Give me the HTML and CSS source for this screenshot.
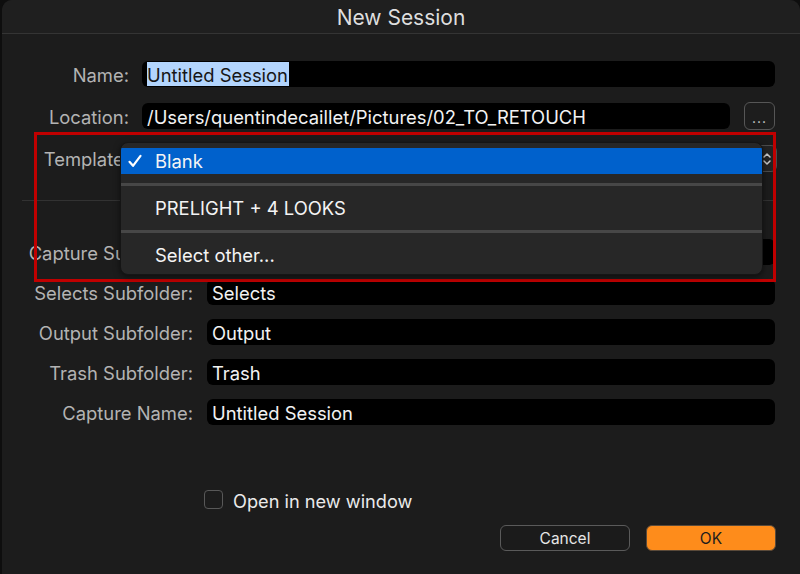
FILE: index.html
```html
<!DOCTYPE html>
<html lang="en">
<head>
<meta charset="utf-8">
<title>New Session</title>
<link rel="stylesheet" href="styles.css">
</head>
<body>
<div class="window">
  <header class="titlebar">New Session</header>

  <section class="form-top">
    <div class="lbl">Name:</div>
    <div class="field"><span class="sel">Untitled Session</span></div>

    <div class="lbl">Location:</div>
    <div class="loc-row">
      <div class="field">/Users/quentindecaillet/Pictures/02_TO_RETOUCH</div>
      <button class="dots">...</button>
    </div>

    <div class="lbl">Template:</div>
    <div class="popup">
      <span>Blank</span>
      <svg class="chev" width="10" height="16" viewBox="0 0 10 16"><path d="M2 6 L5 3 L8 6 M2 10 L5 13 L8 10" fill="none" stroke="#c8c8c8" stroke-width="1.5" stroke-linecap="round" stroke-linejoin="round"/></svg>
    </div>
  </section>

  <div class="sep"></div>

  <section class="form-sub">
    <div class="lbl">Capture Subfolder:</div>
    <div class="field">Capture</div>
    <div class="lbl">Selects Subfolder:</div>
    <div class="field">Selects</div>
    <div class="lbl">Output Subfolder:</div>
    <div class="field">Output</div>
    <div class="lbl">Trash Subfolder:</div>
    <div class="field">Trash</div>
    <div class="lbl">Capture Name:</div>
    <div class="field">Untitled Session</div>
  </section>

  <div class="check-row">
    <span class="checkbox"></span>
    <span class="check-text">Open in new window</span>
  </div>

  <div class="buttons">
    <button class="btn">Cancel</button>
    <button class="btn ok">OK</button>
  </div>

  <div class="mark-box"></div>

  <div class="menu">
    <div class="item active">
      <svg class="tick" width="16" height="16" viewBox="0 0 16 16"><path d="M2.5 8.8 L6 12.8 L13.5 2.8" fill="none" stroke="#fff" stroke-width="2.2" stroke-linecap="round" stroke-linejoin="round"/></svg>
      <span>Blank</span>
    </div>
    <div class="menu-sep"></div>
    <div class="item mid"><span>PRELIGHT + 4 LOOKS</span></div>
    <div class="menu-sep"></div>
    <div class="item last"><span>Select other...</span></div>
  </div>
</div>
</body>
</html>
```

FILE: styles.css
```css
* { box-sizing: border-box; }

html, body {
  margin: 0;
  padding: 0;
  background: #0e0e0e;
  width: 800px;
  height: 574px;
  overflow: hidden;
}

body {
  font-family: "Inter", "Noto Sans", sans-serif;
  color: #eeeeee;
}

.window {
  position: relative;
  margin-left: 2px;
  width: 798px;
  height: 574px;
  background: #1c1c1c;
  border-radius: 10px 10px 0 0;
}

.titlebar {
  height: 34px;
  border-bottom: 1px solid #343434;
  background: #1f1f1f;
  border-radius: 10px 10px 0 0;
  display: flex;
  align-items: center;
  justify-content: center;
  font-size: 21px;
  color: #dedede;
  padding-top: 1px;
}

.lbl {
  font-size: 18.4px;
  color: #b3b3b3;
  text-align: right;
  white-space: nowrap;
  height: 26px;
  line-height: 29px;
}

.field {
  height: 26px;
  background: #000;
  border-radius: 6px;
  font-size: 18.4px;
  line-height: 29px;
  padding-left: 5px;
  color: #f2f2f2;
  white-space: nowrap;
  overflow: hidden;
}

.sel {
  display: inline-block;
  vertical-align: top;
  margin-top: 1px;
  height: 24px;
  line-height: 27px;
  overflow: hidden;
  background: #b3d5fd;
  color: #161616;
  padding-right: 1px;
}

.form-top {
  display: grid;
  grid-template-columns: 127px 1fr;
  column-gap: 13px;
  row-gap: 16px;
  padding: 27px 25px 0 0;
}

.loc-row {
  display: flex;
  align-items: center;
  gap: 14px;
  height: 26px;
}

.loc-row .field { flex: 1; }

.dots {
  width: 31px;
  height: 28px;
  flex: none;
  background: #1d1d1d;
  border: 1.5px solid #565656;
  border-radius: 6px;
  color: #d0d0d0;
  font-family: "Inter", sans-serif;
  font-size: 14px;
  line-height: 20px;
  padding: 4px 0 0;
  letter-spacing: 1px;
}

.popup {
  height: 27px;
  border: 1.5px solid #4c4c4c;
  border-radius: 6px;
  background: #232323;
  display: flex;
  align-items: center;
  justify-content: space-between;
  padding: 0 4px 0 8px;
  font-size: 18px;
  margin-right: -2px;
}

.sep {
  height: 1px;
  background: #323232;
  margin: 28px 25px 0 20px;
}

.form-sub {
  display: grid;
  grid-template-columns: 191px 1fr;
  column-gap: 14px;
  row-gap: 14px;
  padding: 38px 25px 0 0;
}

.check-row {
  display: flex;
  align-items: center;
  gap: 10px;
  margin: 65px 0 0 202px;
  height: 19px;
}

.checkbox {
  flex: none;
  width: 19px;
  height: 19px;
  border: 1.5px solid #585858;
  border-radius: 4px;
  background: #1c1c1c;
}

.check-text {
  font-size: 18.2px;
  color: #eaeaea;
  height: 19px;
  line-height: 22px;
}

.buttons {
  display: flex;
  justify-content: flex-end;
  gap: 16px;
  margin-top: 16px;
  padding-right: 24px;
}

.btn {
  width: 130px;
  height: 26px;
  border-radius: 6px;
  border: 1.5px solid #5a5a5a;
  background: #1b1b1b;
  color: #e6e6e6;
  font-family: "Inter", sans-serif;
  font-size: 15.5px;
  padding: 1px 0 0;
}

.btn.ok {
  background: #fe8c1b;
  border-color: #5a4a3a;
  color: #1d1d1d;
}

.mark-box {
  position: absolute;
  left: 32px;
  top: 132px;
  width: 742px;
  height: 150px;
  border: 3.5px solid #c00000;
}

.menu {
  position: absolute;
  left: 118px;
  top: 142px;
  width: 643px;
  height: 133px;
  background: #272727;
  border: 1px solid #151515;
  border-radius: 8px;
  padding-top: 5px;
  box-shadow: 0 2px 6px rgba(0,0,0,0.5);
  font-size: 18.4px;
  color: #f4f4f4;
  overflow: hidden;
}

.item {
  position: relative;
  display: flex;
  align-items: center;
  padding-left: 34px;
}

.item.active {
  height: 26px;
  background: #0061cc;
  margin-bottom: 9px;
}

.item.mid { height: 44px; }
.item.last { height: 41px; padding-top: 2px; }

.tick {
  position: absolute;
  left: 6px;
  top: 5px;
}

.menu-sep {
  height: 3px;
  background: #474747;
}
```
